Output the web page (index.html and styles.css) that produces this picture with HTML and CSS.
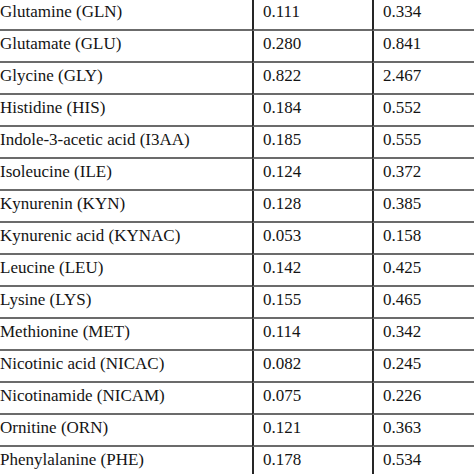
FILE: index.html
```html
<!DOCTYPE html>
<html>
<head>
<meta charset="utf-8">
<link rel="stylesheet" href="styles.css">
</head>
<body>
<div class="frame">
<table class="data">
<colgroup><col class="c1"><col class="c2"><col class="c3"></colgroup>
<tbody>
<tr><td>Glutamine (GLN)</td><td>0.111</td><td>0.334</td></tr>
<tr><td>Glutamate (GLU)</td><td>0.280</td><td>0.841</td></tr>
<tr><td>Glycine (GLY)</td><td>0.822</td><td>2.467</td></tr>
<tr><td>Histidine (HIS)</td><td>0.184</td><td>0.552</td></tr>
<tr><td>Indole-3-acetic acid (I3AA)</td><td>0.185</td><td>0.555</td></tr>
<tr><td>Isoleucine (ILE)</td><td>0.124</td><td>0.372</td></tr>
<tr><td>Kynurenin (KYN)</td><td>0.128</td><td>0.385</td></tr>
<tr><td>Kynurenic acid (KYNAC)</td><td>0.053</td><td>0.158</td></tr>
<tr><td>Leucine (LEU)</td><td>0.142</td><td>0.425</td></tr>
<tr><td>Lysine (LYS)</td><td>0.155</td><td>0.465</td></tr>
<tr><td>Methionine (MET)</td><td>0.114</td><td>0.342</td></tr>
<tr><td>Nicotinic acid (NICAC)</td><td>0.082</td><td>0.245</td></tr>
<tr><td>Nicotinamide (NICAM)</td><td>0.075</td><td>0.226</td></tr>
<tr><td>Ornitine (ORN)</td><td>0.121</td><td>0.363</td></tr>
<tr><td>Phenylalanine (PHE)</td><td>0.178</td><td>0.534</td></tr>
</tbody>
</table>
</div>
</body>
</html>
```
FILE: styles.css
```css
html, body {
  margin: 0;
  padding: 0;
  background: #ffffff;
}
.frame {
  width: 474px;
  height: 474px;
  overflow: hidden;
}
.data {
  margin-top: -1px;
  border-collapse: separate;
  border-spacing: 0;
  table-layout: fixed;
  width: 474px;
  font-family: "Liberation Serif", "Times New Roman", serif;
  font-size: 17px;
  color: #141414;
}
.c1 { width: 252px; }
.c2 { width: 120px; }
.c3 { width: 102px; }
.data td {
  box-sizing: border-box;
  height: 32px;
  padding: 0 0 4px 9px;
  line-height: 26px;
  vertical-align: top;
  white-space: nowrap;
  border-bottom: 2px solid #6b6b6b;
}
.data td:first-child {
  padding-left: 0;
}
.data td + td {
  border-left: 2px solid #262626;
}
```
